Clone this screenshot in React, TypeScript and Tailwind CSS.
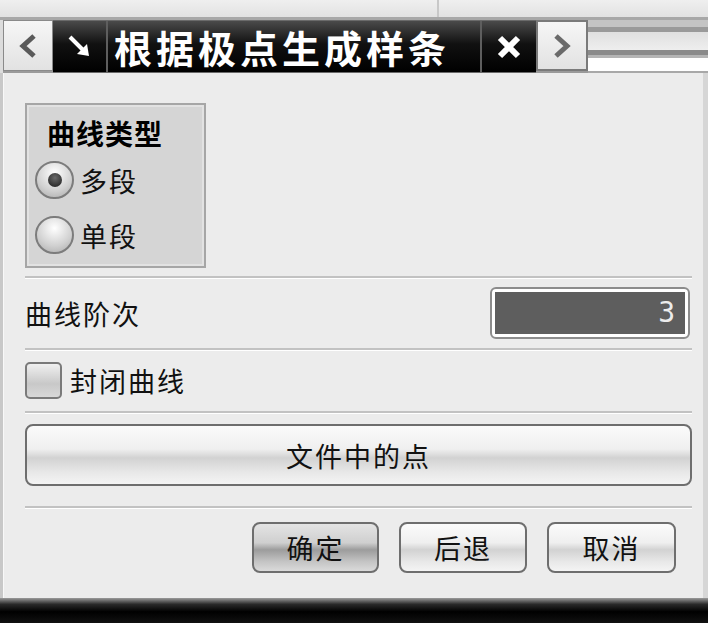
import { FC, ReactNode } from "react";

const cjk = { fontFamily: '"Noto Sans CJK SC", "Noto Sans", sans-serif' };

const Separator: FC = () => (
  <div className="h-[3px] border-t-2 border-[#c2c2c2] border-b border-b-white" />
);

const Radio: FC<{ checked?: boolean; label: string }> = ({ checked, label }) => (
  <div className="flex items-center gap-[6px] h-[38px]">
    <div className="w-[39px] h-[38px] rounded-full border-2 border-[#7c7c7c] bg-[radial-gradient(circle_at_50%_30%,#ffffff,#d0d0d0_60%,#a8a8a8)] flex items-center justify-center">
      {checked && (
        <div className="w-[14px] h-[14px] rounded-full bg-[radial-gradient(circle_at_50%_35%,#6a6a6a,#1a1a1a)]" />
      )}
    </div>
    <span className="text-[27px] leading-none text-[#111] tracking-[2px]">{label}</span>
  </div>
);

const PushButton: FC<{ children: ReactNode; primary?: boolean; className?: string }> = ({
  children,
  primary,
  className,
}) => (
  <button
    type="button"
    className={
      "rounded-[8px] border-2 border-[#6e6e6e] flex items-center justify-center text-[27px] leading-none text-[#111] tracking-[2px] " +
      (primary
        ? "bg-[linear-gradient(#e4e4e4,#cfcfcf_40%,#9c9c9c_55%,#c4c4c4_80%,#dadada)] "
        : "bg-[linear-gradient(#fbfbfb,#efefef_40%,#d2d2d2_55%,#e8e8e8_80%,#f4f4f4)] ") +
      (className ?? "")
    }
  >
    {children}
  </button>
);

const TitleBar: FC = () => (
  <div className="flex h-[53px] bg-[#9a9a9a]">
    <div className="w-[3px] bg-[#dcdcdc]" />
    <div className="w-[50px] h-[51px] bg-[linear-gradient(#f6f6f6,#e2e2e2)] border border-[#8a8a8a] flex items-center justify-center">
      <svg width="22" height="28" viewBox="0 0 22 28">
        <path d="M17 4 L6 14 L17 24" fill="none" stroke="#5a5a5a" strokeWidth="5" strokeLinejoin="miter" />
      </svg>
    </div>
    <div className="flex flex-1 bg-[linear-gradient(#4a4a4a,#111_45%,#000)] border-y border-[#6a6a6a]">
      <div className="w-[55px] flex items-center justify-center border-r-2 border-[#5e5e5e]">
        <svg width="26" height="26" viewBox="0 0 26 26">
          <path d="M3 3 L17 17" stroke="#fff" strokeWidth="4" />
          <path d="M22 22 L10 20 L20 10 Z" fill="#fff" />
        </svg>
      </div>
      <div
        className="w-[374px] flex items-center pl-[6px] text-white font-bold text-[38px] leading-none tracking-[4px] border-r-2 border-[#5e5e5e]"
        style={cjk}
      >
        根据极点生成样条
      </div>
      <div className="w-[54px] flex items-center justify-center">
        <svg width="28" height="28" viewBox="0 0 28 28">
          <path d="M5 5 L23 23 M23 5 L5 23" stroke="#fff" strokeWidth="6" />
        </svg>
      </div>
    </div>
    <div className="w-[52px] h-[51px] bg-[linear-gradient(#f6f6f6,#e2e2e2)] border-2 border-[#7a7a7a] flex items-center justify-center">
      <svg width="22" height="28" viewBox="0 0 22 28">
        <path d="M5 4 L16 14 L5 24" fill="none" stroke="#6a6a6a" strokeWidth="5" />
      </svg>
    </div>
    <div className="flex-1 flex flex-col bg-[#e6e6e6]">
      <div className="h-[7px] bg-[#c4c4c4]" />
      <div className="h-[5px] bg-[#9a9a9a]" />
      <div className="h-[18px] bg-[linear-gradient(#e0e0e0,#eeeeee)]" />
      <div className="h-[5px] bg-[#8a8a8a]" />
      <div className="h-[3px] bg-[#b4b4b4]" />
      <div className="flex-1 bg-white border-b-2 border-[#a8a8a8]" />
    </div>
  </div>
);

export default function App() {
  return (
    <div className="w-[708px] h-[623px] flex flex-col bg-[#ececec] overflow-hidden" style={cjk}>
      <div className="h-[20px] flex flex-col">
        <div className="flex-1 flex bg-[linear-gradient(#efefef,#e2e2e2)]">
          <div className="w-[437px]" />
          <div className="w-[2px] bg-[#c8c8c8]" />
        </div>
        <div className="h-[3px] bg-[#a8a8a8]" />
      </div>
      <TitleBar />
      <div className="flex-1 flex">
        <div className="w-[4px] bg-[#c8c8c8] border-r border-[#f8f8f8]" />
        <div className="flex-1 flex flex-col pl-[21px] pr-[11px]">
          <div className="mt-[30px] w-[181px] h-[165px] border-2 border-[#a6a6a6] bg-[#d5d5d5] shadow-[inset_0_0_0_2px_#e2e2e2] flex flex-col pl-[8px]">
            <div className="mt-[14px] ml-[12px] text-[28px] leading-none font-bold text-black tracking-[1px]">
              曲线类型
            </div>
            <div className="mt-[14px] flex flex-col gap-[17px]">
              <Radio checked label="多段" />
              <Radio label="单段" />
            </div>
          </div>
          <div className="mt-[8px]">
            <Separator />
          </div>
          <div className="mt-[8px] h-[52px] flex items-center justify-between">
            <span className="text-[27px] leading-none text-[#111] tracking-[2px]">曲线阶次</span>
            <div className="w-[200px] h-[52px] rounded-[6px] border-2 border-[#8c8c8c] bg-white p-[3px] mr-[2px]">
              <div
                className="w-full h-full bg-[#5e5e5e] flex items-center justify-end pr-[10px] text-[28px] leading-none text-[#ececec]"
                style={{ fontFamily: '"DejaVu Sans Mono", monospace' }}
              >
                3
              </div>
            </div>
          </div>
          <div className="mt-[9px]">
            <Separator />
          </div>
          <div className="mt-[11px] h-[37px] flex items-center gap-[8px]">
            <div className="w-[37px] h-[37px] rounded-[5px] border-2 border-[#7a7a7a] bg-[linear-gradient(#f0f0f0,#c8c8c8_60%,#d8d8d8)]" />
            <span className="text-[27px] leading-none text-[#111] tracking-[2px]">封闭曲线</span>
          </div>
          <div className="mt-[12px]">
            <Separator />
          </div>
          <PushButton className="mt-[10px] h-[62px] w-full">文件中的点</PushButton>
          <div className="mt-[20px]">
            <Separator />
          </div>
          <div className="mt-[13px] flex justify-end gap-[20px] pr-[16px]">
            <PushButton primary className="w-[127px] h-[51px]">
              确定
            </PushButton>
            <PushButton className="w-[128px] h-[51px]">后退</PushButton>
            <PushButton className="w-[129px] h-[51px]">取消</PushButton>
          </div>
        </div>
        <div className="w-[5px] bg-[#d6d6d6]" />
      </div>
      <div className="h-[25px] bg-[linear-gradient(#9a9a9a,#2a2a2a_25%,#000_55%,#111)]" />
    </div>
  );
}
